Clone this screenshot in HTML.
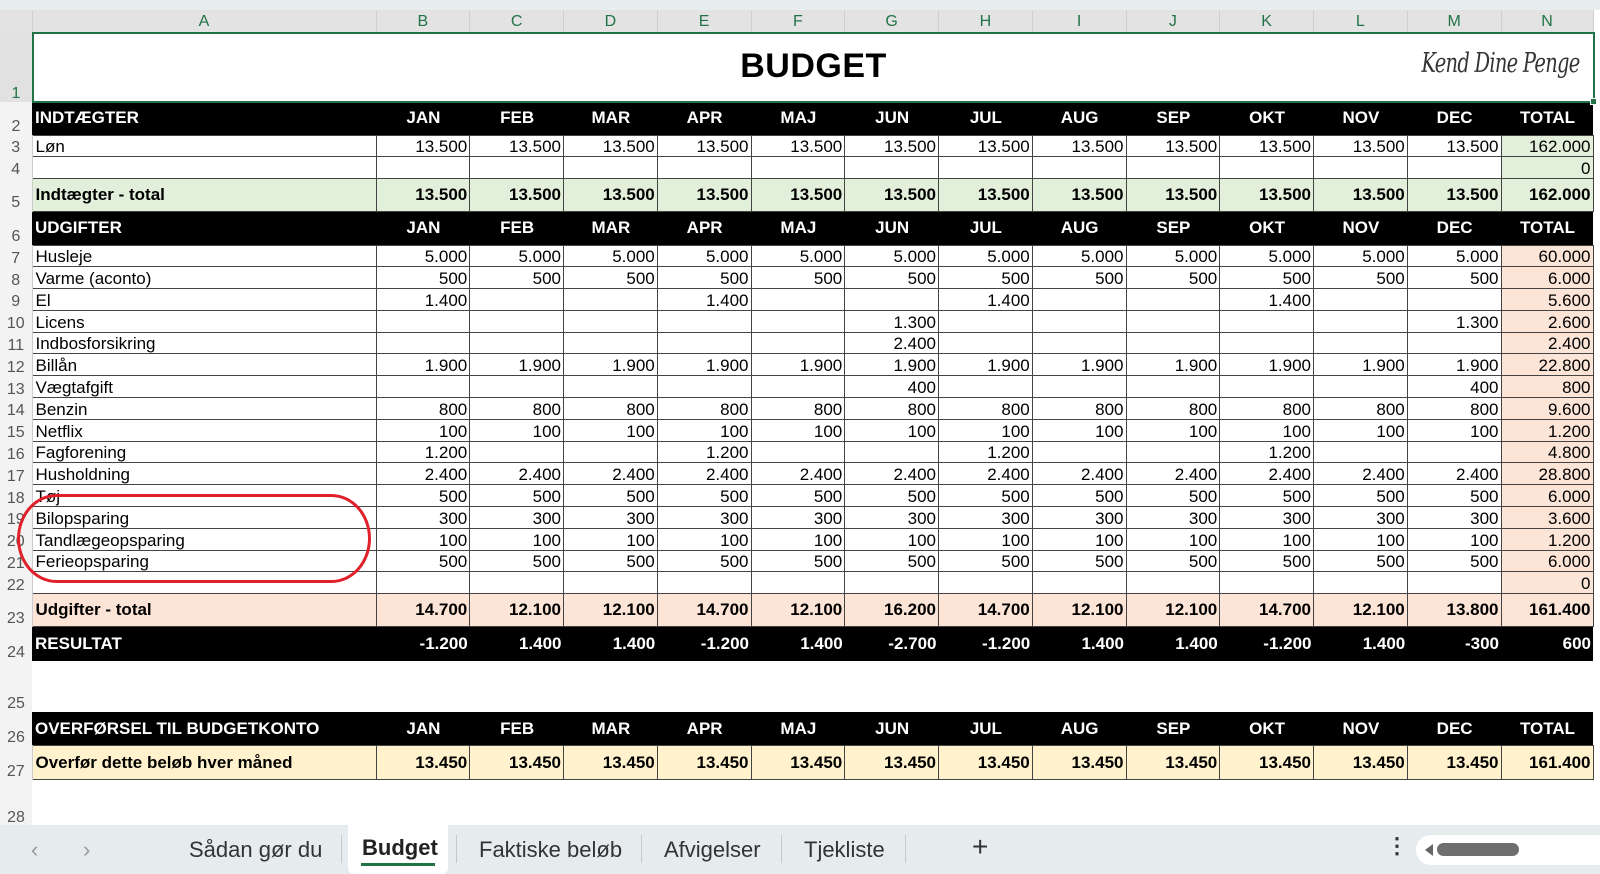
<!DOCTYPE html>
<html><head><meta charset="utf-8"><style>
*{margin:0;padding:0;box-sizing:border-box}
body{width:1600px;height:874px;overflow:hidden;background:#fff;font-family:"Liberation Sans",Arial,sans-serif;position:relative}
.top{position:absolute;left:0;top:0;width:1600px;height:10px;background:#e8edf0}
table{position:absolute;left:0;top:10px;border-collapse:collapse;table-layout:fixed;width:1593px}
td{font-size:17px;line-height:17px;color:#000;padding:0 2px 1px 3px;white-space:nowrap;overflow:hidden;vertical-align:bottom;border:1px solid #444;text-align:right}
td.l{text-align:left}
td.rh{background:#f3f3f3;color:#555;text-align:center;border:none;border-right:1px solid #ccc;font-size:16px;padding:0}
tr.ch td{background:#e3e3e3;color:#217346;text-align:center;border:none;border-right:1px solid #cfcfcf;font-size:16px;vertical-align:middle;height:22px;padding:0}
tr.bk td{background:#000;color:#fff;font-weight:bold;text-align:center;border:none;vertical-align:middle}
tr.bk td.l{text-align:left}
tr.bk td.rh{background:#f3f3f3;color:#555;font-weight:normal;vertical-align:bottom}
tr.bk td.r{text-align:right}
tr.g td{background:#e2efda;font-weight:bold;vertical-align:middle}
tr.p td{background:#fce4d6;font-weight:bold;vertical-align:middle}
tr.y td{background:#fff2cc;font-weight:bold;vertical-align:middle}
tr.g td.rh,tr.p td.rh,tr.y td.rh{background:#f3f3f3;font-weight:normal;vertical-align:bottom}
td.gt{background:#e2efda}
td.pt{background:#fce4d6}
tr.d td{height:21.8px}
tr.e td{border:none}
.title{position:absolute;left:32px;top:32px;width:1563px;height:71px;border:2px solid #217346}
.title b{position:absolute;left:0;width:100%;text-align:center;top:13px;font-size:34px;letter-spacing:0.5px}
.title i{position:absolute;right:14px;top:14px;font-family:"DejaVu Serif",serif;font-size:27px;font-weight:200;color:#333;transform:scaleX(0.72);transform-origin:right;letter-spacing:-1px}
.handle{position:absolute;left:1590px;top:98px;width:7px;height:7px;background:#217346;border:1px solid #fff}
.ell{position:absolute;left:17px;top:494px;width:354px;height:89px;border:3px solid #e0202a;border-radius:40px/45px}
.tabs{position:absolute;left:0;top:825px;width:1600px;height:49px;background:#e6ebee}
.tabs span{position:absolute;top:12px;font-size:22px;color:#333}
.tab{position:absolute;left:348px;top:0;width:100px;height:49px;background:#fff;border-radius:0 0 6px 6px}
.sep{position:absolute;top:10px;width:1px;height:28px;background:#c8c8c8}
.sb{position:absolute;left:1416px;top:10px;width:184px;height:30px;background:#fff;border-radius:15px 0 0 15px}
</style></head><body>
<div class="top"></div>
<table>
<colgroup><col style="width:32px"><col style="width:344px"><col span="12" style="width:93.75px"><col style="width:92px"></colgroup>
<tr class="ch"><td></td><td>A</td><td>B</td><td>C</td><td>D</td><td>E</td><td>F</td><td>G</td><td>H</td><td>I</td><td>J</td><td>K</td><td>L</td><td>M</td><td>N</td></tr>
<tr class="e"><td class="rh" style="height:70px;background:#e1e1e1;color:#217346">1</td><td colspan="14"></td></tr>
<tr class="bk" style="height:33px"><td class="rh">2</td><td class="l">INDTÆGTER</td><td>JAN</td><td>FEB</td><td>MAR</td><td>APR</td><td>MAJ</td><td>JUN</td><td>JUL</td><td>AUG</td><td>SEP</td><td>OKT</td><td>NOV</td><td>DEC</td><td>TOTAL</td></tr>
<tr style="height:21px"><td class="rh">3</td><td class="l">Løn</td><td>13.500</td><td>13.500</td><td>13.500</td><td>13.500</td><td>13.500</td><td>13.500</td><td>13.500</td><td>13.500</td><td>13.500</td><td>13.500</td><td>13.500</td><td>13.500</td><td class="gt">162.000</td></tr>
<tr style="height:22px"><td class="rh">4</td><td class="l"></td><td></td><td></td><td></td><td></td><td></td><td></td><td></td><td></td><td></td><td></td><td></td><td></td><td class="gt">0</td></tr>
<tr class="g" style="height:33px"><td class="rh">5</td><td class="l">Indtægter - total</td><td>13.500</td><td>13.500</td><td>13.500</td><td>13.500</td><td>13.500</td><td>13.500</td><td>13.500</td><td>13.500</td><td>13.500</td><td>13.500</td><td>13.500</td><td>13.500</td><td>162.000</td></tr>
<tr class="bk" style="height:34px"><td class="rh">6</td><td class="l">UDGIFTER</td><td>JAN</td><td>FEB</td><td>MAR</td><td>APR</td><td>MAJ</td><td>JUN</td><td>JUL</td><td>AUG</td><td>SEP</td><td>OKT</td><td>NOV</td><td>DEC</td><td>TOTAL</td></tr>
<tr class="d"><td class="rh">7</td><td class="l">Husleje</td><td>5.000</td><td>5.000</td><td>5.000</td><td>5.000</td><td>5.000</td><td>5.000</td><td>5.000</td><td>5.000</td><td>5.000</td><td>5.000</td><td>5.000</td><td>5.000</td><td class="pt">60.000</td></tr>
<tr class="d"><td class="rh">8</td><td class="l">Varme (aconto)</td><td>500</td><td>500</td><td>500</td><td>500</td><td>500</td><td>500</td><td>500</td><td>500</td><td>500</td><td>500</td><td>500</td><td>500</td><td class="pt">6.000</td></tr>
<tr class="d"><td class="rh">9</td><td class="l">El</td><td>1.400</td><td></td><td></td><td>1.400</td><td></td><td></td><td>1.400</td><td></td><td></td><td>1.400</td><td></td><td></td><td class="pt">5.600</td></tr>
<tr class="d"><td class="rh">10</td><td class="l">Licens</td><td></td><td></td><td></td><td></td><td></td><td>1.300</td><td></td><td></td><td></td><td></td><td></td><td>1.300</td><td class="pt">2.600</td></tr>
<tr class="d"><td class="rh">11</td><td class="l">Indbosforsikring</td><td></td><td></td><td></td><td></td><td></td><td>2.400</td><td></td><td></td><td></td><td></td><td></td><td></td><td class="pt">2.400</td></tr>
<tr class="d"><td class="rh">12</td><td class="l">Billån</td><td>1.900</td><td>1.900</td><td>1.900</td><td>1.900</td><td>1.900</td><td>1.900</td><td>1.900</td><td>1.900</td><td>1.900</td><td>1.900</td><td>1.900</td><td>1.900</td><td class="pt">22.800</td></tr>
<tr class="d"><td class="rh">13</td><td class="l">Vægtafgift</td><td></td><td></td><td></td><td></td><td></td><td>400</td><td></td><td></td><td></td><td></td><td></td><td>400</td><td class="pt">800</td></tr>
<tr class="d"><td class="rh">14</td><td class="l">Benzin</td><td>800</td><td>800</td><td>800</td><td>800</td><td>800</td><td>800</td><td>800</td><td>800</td><td>800</td><td>800</td><td>800</td><td>800</td><td class="pt">9.600</td></tr>
<tr class="d"><td class="rh">15</td><td class="l">Netflix</td><td>100</td><td>100</td><td>100</td><td>100</td><td>100</td><td>100</td><td>100</td><td>100</td><td>100</td><td>100</td><td>100</td><td>100</td><td class="pt">1.200</td></tr>
<tr class="d"><td class="rh">16</td><td class="l">Fagforening</td><td>1.200</td><td></td><td></td><td>1.200</td><td></td><td></td><td>1.200</td><td></td><td></td><td>1.200</td><td></td><td></td><td class="pt">4.800</td></tr>
<tr class="d"><td class="rh">17</td><td class="l">Husholdning</td><td>2.400</td><td>2.400</td><td>2.400</td><td>2.400</td><td>2.400</td><td>2.400</td><td>2.400</td><td>2.400</td><td>2.400</td><td>2.400</td><td>2.400</td><td>2.400</td><td class="pt">28.800</td></tr>
<tr class="d"><td class="rh">18</td><td class="l">Tøj</td><td>500</td><td>500</td><td>500</td><td>500</td><td>500</td><td>500</td><td>500</td><td>500</td><td>500</td><td>500</td><td>500</td><td>500</td><td class="pt">6.000</td></tr>
<tr class="d"><td class="rh">19</td><td class="l">Bilopsparing</td><td>300</td><td>300</td><td>300</td><td>300</td><td>300</td><td>300</td><td>300</td><td>300</td><td>300</td><td>300</td><td>300</td><td>300</td><td class="pt">3.600</td></tr>
<tr class="d"><td class="rh">20</td><td class="l">Tandlægeopsparing</td><td>100</td><td>100</td><td>100</td><td>100</td><td>100</td><td>100</td><td>100</td><td>100</td><td>100</td><td>100</td><td>100</td><td>100</td><td class="pt">1.200</td></tr>
<tr class="d"><td class="rh">21</td><td class="l">Ferieopsparing</td><td>500</td><td>500</td><td>500</td><td>500</td><td>500</td><td>500</td><td>500</td><td>500</td><td>500</td><td>500</td><td>500</td><td>500</td><td class="pt">6.000</td></tr>
<tr class="d"><td class="rh">22</td><td class="l"></td><td></td><td></td><td></td><td></td><td></td><td></td><td></td><td></td><td></td><td></td><td></td><td></td><td class="pt">0</td></tr>
<tr class="p" style="height:33px"><td class="rh">23</td><td class="l">Udgifter - total</td><td>14.700</td><td>12.100</td><td>12.100</td><td>14.700</td><td>12.100</td><td>16.200</td><td>14.700</td><td>12.100</td><td>12.100</td><td>14.700</td><td>12.100</td><td>13.800</td><td>161.400</td></tr>
<tr class="bk" style="height:34px"><td class="rh">24</td><td class="l">RESULTAT</td><td class="r">-1.200</td><td class="r">1.400</td><td class="r">1.400</td><td class="r">-1.200</td><td class="r">1.400</td><td class="r">-2.700</td><td class="r">-1.200</td><td class="r">1.400</td><td class="r">1.400</td><td class="r">-1.200</td><td class="r">1.400</td><td class="r">-300</td><td class="r">600</td></tr>
<tr class="e"><td class="rh" style="height:51px">25</td><td colspan="14"></td></tr>
<tr class="bk" style="height:34px"><td class="rh">26</td><td class="l">OVERFØRSEL TIL BUDGETKONTO</td><td>JAN</td><td>FEB</td><td>MAR</td><td>APR</td><td>MAJ</td><td>JUN</td><td>JUL</td><td>AUG</td><td>SEP</td><td>OKT</td><td>NOV</td><td>DEC</td><td>TOTAL</td></tr>
<tr class="y" style="height:34px"><td class="rh">27</td><td class="l">Overfør dette beløb hver måned</td><td>13.450</td><td>13.450</td><td>13.450</td><td>13.450</td><td>13.450</td><td>13.450</td><td>13.450</td><td>13.450</td><td>13.450</td><td>13.450</td><td>13.450</td><td>13.450</td><td>161.400</td></tr>
<tr class="e"><td class="rh" style="height:46px">28</td><td colspan="14"></td></tr>
</table>
<div class="title"><b>BUDGET</b><i>Kend Dine Penge</i></div>
<div class="handle"></div>
<div class="ell"></div>
<div class="tabs">
<span style="left:31px;color:#999">&#x2039;</span><span style="left:83px;color:#999">&#x203A;</span>
<div class="tab"></div>
<span style="left:189px">Sådan gør du</span>
<div class="sep" style="left:341px"></div>
<span style="left:362px;top:10px;font-weight:bold;color:#222">Budget</span>
<div style="position:absolute;left:361px;top:38px;width:74px;height:3px;background:#217346"></div>
<div class="sep" style="left:456px"></div>
<span style="left:479px">Faktiske beløb</span>
<div class="sep" style="left:641px"></div>
<span style="left:664px">Afvigelser</span>
<div class="sep" style="left:781px"></div>
<span style="left:804px">Tjekliste</span>
<div class="sep" style="left:905px"></div>
<span style="left:972px;font-size:28px;top:6px">+</span>
<span style="left:1386px;top:8px;font-weight:bold">&#8942;</span>
<div class="sb"></div>
<div style="position:absolute;left:1425px;top:19px;width:0;height:0;border-top:6px solid transparent;border-bottom:6px solid transparent;border-right:8px solid #666"></div>
<div style="position:absolute;left:1437px;top:18px;width:82px;height:13px;background:#6e6e6e;border-radius:7px"></div>
</div>
</body></html>
